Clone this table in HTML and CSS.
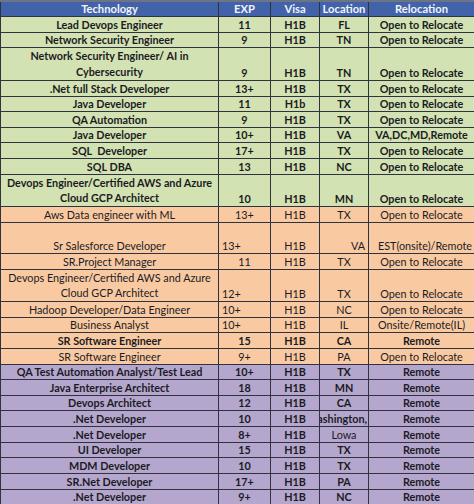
FILE: index.html
```html
<!DOCTYPE html>
<html>
<head>
<meta charset="utf-8">
<link rel="stylesheet" href="styles.css">
</head>
<body>
<table class="sheet">
  <colgroup>
    <col class="c-tech"><col class="c-exp"><col class="c-visa"><col class="c-loc"><col class="c-rel">
  </colgroup>
  <thead>
    <tr class="head"><th>Technology</th><th>EXP</th><th>Visa</th><th>Location</th><th>Relocation</th></tr>
  </thead>
  <tbody>
    <tr class="green"><td>Lead Devops Engineer</td><td>11</td><td>H1B</td><td>FL</td><td>Open to Relocate</td></tr>
    <tr class="green"><td>Network Security Engineer</td><td>9</td><td>H1B</td><td>TN</td><td>Open to Relocate</td></tr>
    <tr class="green tall"><td class="wrap">Network Security Engineer/ AI in Cybersecurity</td><td>9</td><td>H1B</td><td>TN</td><td>Open to Relocate</td></tr>
    <tr class="green"><td>.Net full Stack Developer</td><td>13+</td><td>H1B</td><td>TX</td><td>Open to Relocate</td></tr>
    <tr class="green"><td>Java Developer</td><td>11</td><td>H1b</td><td>TX</td><td>Open to Relocate</td></tr>
    <tr class="green"><td>QA Automation</td><td>9</td><td>H1B</td><td>TX</td><td>Open to Relocate</td></tr>
    <tr class="green"><td>Java Developer</td><td>10+</td><td>H1B</td><td>VA</td><td>VA,DC,MD,Remote</td></tr>
    <tr class="green"><td>SQL&nbsp; Developer</td><td>17+</td><td>H1B</td><td>TX</td><td>Open to Relocate</td></tr>
    <tr class="green"><td>SQL DBA</td><td>13</td><td>H1B</td><td>NC</td><td>Open to Relocate</td></tr>
    <tr class="green tall"><td class="wrap">Devops Engineer/Certified AWS and Azure Cloud GCP Architect</td><td>10</td><td>H1B</td><td>MN</td><td>Open to Relocate</td></tr>
    <tr class="orange"><td>Aws Data engineer with ML</td><td>13+</td><td>H1B</td><td>TX</td><td>Open to Relocate</td></tr>
    <tr class="orange tall"><td>Sr Salesforce Developer</td><td class="left">13+</td><td>H1B</td><td class="right">VA</td><td class="over">EST(onsite)/Remote</td></tr>
    <tr class="orange"><td>SR.Project Manager</td><td>11</td><td>H1B</td><td>TX</td><td>Open to Relocate</td></tr>
    <tr class="orange tall"><td class="wrap">Devops Engineer/Certified AWS and Azure Cloud GCP Architect</td><td class="left">12+</td><td>H1B</td><td>TX</td><td>Open to Relocate</td></tr>
    <tr class="orange"><td>Hadoop Developer/Data Engineer</td><td class="left">10+</td><td>H1B</td><td>NC</td><td>Open to Relocate</td></tr>
    <tr class="orange"><td>Business Analyst</td><td class="left">10+</td><td>H1B</td><td>IL</td><td>Onsite/Remote(IL)</td></tr>
    <tr class="orange strong"><td>SR Software Engineer</td><td>15</td><td>H1B</td><td>CA</td><td>Remote</td></tr>
    <tr class="orange"><td>SR Software Engineer</td><td>9+</td><td>H1B</td><td>PA</td><td>Open to Relocate</td></tr>
    <tr class="purple"><td>QA Test Automation Analyst/Test Lead</td><td>10+</td><td>H1B</td><td>TX</td><td>Remote</td></tr>
    <tr class="purple"><td>Java Enterprise Architect</td><td>18</td><td>H1B</td><td>MN</td><td>Remote</td></tr>
    <tr class="purple"><td>Devops Architect</td><td>12</td><td>H1B</td><td>CA</td><td>Remote</td></tr>
    <tr class="purple"><td>.Net Developer</td><td>10</td><td>H1B</td><td class="clip"><span>Washington,</span></td><td>Remote</td></tr>
    <tr class="purple"><td>.Net Developer</td><td>8+</td><td>H1B</td><td class="thin">Lowa</td><td>Remote</td></tr>
    <tr class="purple"><td>UI Developer</td><td>15</td><td>H1B</td><td>TX</td><td>Remote</td></tr>
    <tr class="purple"><td>MDM Developer</td><td>10</td><td>H1B</td><td>TX</td><td>Remote</td></tr>
    <tr class="purple"><td>SR.Net Developer</td><td>17+</td><td>H1B</td><td>PA</td><td>Remote</td></tr>
    <tr class="purple"><td>.Net Developer</td><td>9+</td><td>H1B</td><td>NC</td><td>Remote</td></tr>
  </tbody>
</table>
</body>
</html>
```
FILE: styles.css
```css
html, body {
  margin: 0;
  padding: 0;
  background: #ffffff;
}

.sheet {
  width: 474px;
  table-layout: fixed;
  border-collapse: collapse;
  font-family: Lato, "Open Sans", sans-serif;
  font-size: 10.8px;
  font-weight: 700;
  color: #1b1b24;
  border-top: 2px solid #6c7486;
}

.c-tech { width: 218px; }
.c-exp { width: 52px; }
.c-visa { width: 49px; }
.c-loc { width: 49px; }
.c-rel { width: 106px; }

.sheet th,
.sheet td {
  border: 1px solid #2f3340;
  padding: 0 1px 1px;
  text-align: center;
  vertical-align: bottom;
  white-space: nowrap;
  overflow: hidden;
  line-height: 12px;
}

.sheet tr { height: 15.62px; }
.sheet tr.tall { height: 31.24px; }

.head th {
  background: #4263a9;
  color: #f2f4fa;
  font-weight: 700;
  font-size: 11.2px;
  height: 13px;
}

.green td { background: #d3e2b2; }
.orange td { background: #f9caa2; font-weight: 400; }
.orange.strong td { font-weight: 700; }
.purple td { background: #b5a6cd; }

.sheet td.wrap {
  white-space: normal;
  line-height: 15.3px;
}

.sheet td.left { text-align: left; padding-left: 3px; }
.sheet td.right { text-align: right; padding-right: 3px; }
.sheet td.over { text-align: right; padding-right: 2px; }
.sheet td.thin { font-weight: 400; }
.sheet td.clip span {
  display: block;
  margin-left: -30px;
  text-align: right;
}
```
